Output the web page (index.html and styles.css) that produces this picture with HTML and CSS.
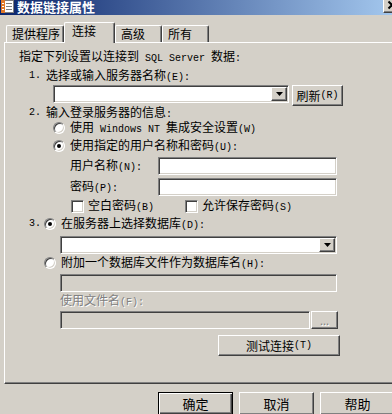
FILE: index.html
```html
<!DOCTYPE html>
<html lang="zh-CN">
<head>
  <meta charset="UTF-8" />
  <title>数据链接属性</title>
  <link rel="stylesheet" href="styles.css">
</head>
<body>
  <div class="window">
    <div class="titlebar">
      <svg class="app-icon" viewBox="0 0 14 15" width="14" height="15">
        <rect x="1.5" y="0.5" width="12" height="12" fill="#fff" stroke="#808080" />
        <rect x="1" y="0" width="4" height="13" fill="#e07828" />
        <rect x="2" y="3" width="2" height="1" fill="#fff" />
        <rect x="2" y="6" width="2" height="1" fill="#fff" />
        <rect x="2" y="9" width="2" height="1" fill="#fff" />
        <rect x="6" y="3" width="6" height="1" fill="#808080" />
        <rect x="6" y="6" width="6" height="1" fill="#808080" />
        <rect x="6" y="9" width="6" height="1" fill="#808080" />
      </svg>
      <span class="title">数据链接属性</span>
      <span class="close">
        <svg viewBox="0 0 16 13" width="16" height="13">
          <path d="M3.5 1.5 L10.5 8.5 M10.5 1.5 L3.5 8.5" stroke="#000" stroke-width="2" fill="none" />
        </svg>
      </span>
    </div>

    <div class="tabs">
      <div class="tab tab-wide">提供程序</div>
      <div class="tab active">连接</div>
      <div class="tab">高级</div>
      <div class="tab">所有</div>
    </div>

    <div class="panel">
      <div class="row intro">
        <span class="text">指定下列设置以连接到<span class="en"> SQL Server </span>数据<span class="en">:</span></span>
      </div>

      <div class="row step step-1">
        <span class="num en">1.</span>
        <span class="text">选择或输入服务器名称<span class="en">(E):</span></span>
      </div>
      <div class="row server-row">
        <div class="field combo server-combo"><span class="drop"><svg viewBox="0 0 7 4" width="7" height="4"><polygon points="0,0 7,0 3.5,4" fill="#000" /></svg></span></div>
        <button class="btn refresh" type="button">刷新<span class="en">(R)</span></button>
      </div>

      <div class="row step">
        <span class="num en">2.</span>
        <span class="text">输入登录服务器的信息<span class="en">:</span></span>
      </div>
      <div class="row option option-nt">
        <span class="radio"></span>
        <span class="text">使用<span class="en"> Windows NT </span>集成安全设置<span class="en">(W)</span></span>
      </div>
      <div class="row option option-user">
        <span class="radio on"></span>
        <span class="text">使用指定的用户名称和密码<span class="en">(U):</span></span>
      </div>
      <div class="row login login-user">
        <span class="text login-label">用户名称<span class="en">(N):</span></span>
        <span class="field login-field"></span>
      </div>
      <div class="row login login-pass">
        <span class="text login-label">密码<span class="en">(P):</span></span>
        <span class="field login-field"></span>
      </div>
      <div class="row checks">
        <span class="check"></span>
        <span class="text check-label">空白密码<span class="en">(B)</span></span>
        <span class="check check-save"></span>
        <span class="text check-label">允许保存密码<span class="en">(S)</span></span>
      </div>

      <div class="row step db-step">
        <span class="num en">3.</span>
        <span class="radio on"></span>
        <span class="text radio-text">在服务器上选择数据库<span class="en">(D):</span></span>
      </div>
      <div class="row db-row">
        <div class="field combo db-combo"><span class="drop"><svg viewBox="0 0 7 4" width="7" height="4"><polygon points="0,0 7,0 3.5,4" fill="#000" /></svg></span></div>
      </div>
      <div class="row attach">
        <span class="radio"></span>
        <span class="text radio-text">附加一个数据库文件作为数据库名<span class="en">(H):</span></span>
      </div>
      <div class="row attach-row">
        <span class="field off attach-field"></span>
      </div>
      <div class="row file-label">
        <span class="text disabled">使用文件名<span class="en">(F):</span></span>
      </div>
      <div class="row file-row">
        <span class="field off file-field"></span>
        <button class="btn browse disabled" type="button">...</button>
      </div>
      <div class="row test-row">
        <button class="btn test" type="button">测试连接<span class="en">(T)</span></button>
      </div>
    </div>

    <div class="dialog-buttons">
      <button class="btn dlg default" type="button">确定</button>
      <button class="btn dlg" type="button">取消</button>
      <button class="btn dlg" type="button">帮助</button>
    </div>
  </div>
</body>
</html>
```

FILE: styles.css
```css
* {
  box-sizing: border-box;
}
body {
  margin: 0;
  width: 392px;
  height: 414px;
  overflow: hidden;
  background: #d4d0c8;
  color: #000;
  font-family: "Noto Sans CJK SC", sans-serif;
  font-size: 12px;
}
.window {
  width: 400px;
}
.en {
  font-family: "Liberation Mono", monospace;
  font-size: 10px;
}

/* title bar */
.titlebar {
  height: 15px;
  display: flex;
  align-items: flex-start;
  background: linear-gradient(to right, #0a246a, #a6caf0);
}
.app-icon {
  flex-shrink: 0;
}
.title {
  margin-left: 3px;
  color: #fff;
  font-weight: bold;
  font-size: 13px;
  line-height: 14px;
}
.close {
  margin-left: auto;
  margin-right: 1px;
  width: 16px;
  height: 13px;
  background: #d4d0c8;
  border-left: 1px solid #fff;
  border-right: 1px solid #404040;
  border-bottom: 1px solid #404040;
  box-shadow: inset -1px -1px #808080;
}
.close svg {
  display: block;
  margin-left: 1px;
}

/* tabs */
.tabs {
  position: relative;
  z-index: 1;
  display: flex;
  align-items: flex-end;
  height: 27px;
  padding-left: 6px;
}
.tab {
  width: 47px;
  height: 17px;
  padding-left: 5px;
  line-height: 16px;
  white-space: nowrap;
  border: 1px solid #fff;
  border-bottom: 0;
  border-right-color: #404040;
  border-radius: 2px 2px 0 0;
  box-shadow: inset -1px 0 #808080;
  background: #d4d0c8;
}
.tab-wide {
  width: 58px;
}
.tab.active {
  width: 51px;
  height: 21px;
  margin-bottom: -1px;
  padding-left: 7px;
}

/* panel */
.panel {
  margin-left: 4px;
  width: 392px;
  height: 342px;
  padding-top: 7px;
  border: 1px solid #fff;
  border-right-color: #404040;
  border-bottom-color: #404040;
  box-shadow: inset -1px -1px #808080;
}
.row {
  display: flex;
  align-items: center;
  height: 14px;
  line-height: 14px;
  white-space: nowrap;
}
.intro {
  margin-left: 14px;
}
.step {
  margin-left: 24px;
}
.step-1 {
  margin-top: 5px;
}
.num {
  width: 17px;
  flex-shrink: 0;
}

/* sunken fields */
.field {
  display: block;
  position: relative;
  height: 18px;
  background: #fff;
  border: 1px solid;
  border-color: #808080 #fff #fff #808080;
  box-shadow: inset 1px 1px #404040, inset -1px -1px #d4d0c8;
}
.field.off {
  background: #d4d0c8;
}
.drop {
  position: absolute;
  right: 1px;
  top: 1px;
  width: 16px;
  height: 14px;
  display: flex;
  align-items: center;
  justify-content: center;
  background: #d4d0c8;
  border: 1px solid;
  border-color: #fff #404040 #404040 #fff;
  box-shadow: inset -1px -1px #808080;
}
.drop svg {
  display: block;
}

/* buttons */
.btn {
  display: flex;
  align-items: center;
  justify-content: center;
  padding: 0;
  background: #d4d0c8;
  color: #000;
  font: inherit;
  line-height: 14px;
  border: 1px solid;
  border-color: #fff #404040 #404040 #fff;
  box-shadow: inset -1px -1px #808080;
}
.btn.default {
  border-color: #000;
  box-shadow: inset 1px 1px #fff, inset -1px -1px #404040, inset -2px -2px #808080;
}
.disabled {
  color: #808080;
  text-shadow: 1px 1px 0 #fff;
}

.server-row {
  height: 21px;
  margin-top: 2px;
  margin-left: 48px;
  align-items: flex-start;
}
.server-combo {
  width: 236px;
}
.refresh {
  width: 51px;
  height: 21px;
  margin-left: 3px;
}

/* radios and checks */
.radio {
  position: relative;
  flex-shrink: 0;
  width: 12px;
  height: 12px;
  border-radius: 50%;
  background: #fff;
  border: 1px solid;
  border-color: #808080 #fff #fff #808080;
  box-shadow: inset 1px 1px #404040, inset -1px -1px #d4d0c8;
}
.radio.on::after {
  content: "";
  position: absolute;
  left: 3px;
  top: 3px;
  width: 4px;
  height: 4px;
  border-radius: 50%;
  background: #000;
}
.option {
  margin-left: 48px;
}
.option .radio {
  margin-right: 5px;
}
.option-nt {
  margin-top: 1px;
}
.option-user {
  margin-top: 4px;
}
.login {
  height: 18px;
  margin-left: 65px;
}
.login-user {
  margin-top: 4px;
}
.login-pass {
  margin-top: 3px;
}
.login-label {
  width: 88px;
}
.login-field {
  width: 179px;
}
.checks {
  height: 13px;
  margin-top: 4px;
  margin-left: 66px;
}
.check {
  flex-shrink: 0;
  width: 13px;
  height: 13px;
  background: #fff;
  border: 1px solid;
  border-color: #808080 #fff #fff #808080;
  box-shadow: inset 1px 1px #404040, inset -1px -1px #d4d0c8;
}
.check-label {
  margin-left: 4px;
}
.check-save {
  margin-left: 31px;
}

/* database section */
.db-step {
  margin-top: 4px;
}
.radio-text {
  margin-left: 5px;
}
.db-step .num {
  width: 15px;
}
.db-row {
  height: 18px;
  margin-top: 5px;
  margin-left: 55px;
}
.db-combo {
  width: 277px;
}
.attach {
  margin-top: 2px;
  margin-left: 39px;
}
.attach-row {
  height: 18px;
  margin-top: 4px;
  margin-left: 55px;
}
.attach-field {
  width: 277px;
}
.file-label {
  margin-top: 2px;
  margin-left: 55px;
}
.file-row {
  height: 18px;
  margin-top: 3px;
  margin-left: 55px;
}
.file-field {
  width: 250px;
}
.browse {
  width: 27px;
  height: 18px;
  margin-left: 1px;
  font-size: 11px;
}
.test-row {
  height: 21px;
  margin-top: 6px;
  margin-left: 213px;
}
.test {
  width: 122px;
  height: 21px;
}

/* dialog buttons */
.dialog-buttons {
  display: flex;
  gap: 6px;
  margin-top: 8px;
  padding-left: 158px;
}
.dlg {
  width: 75px;
  height: 23px;
  font-size: 13px;
}
```
